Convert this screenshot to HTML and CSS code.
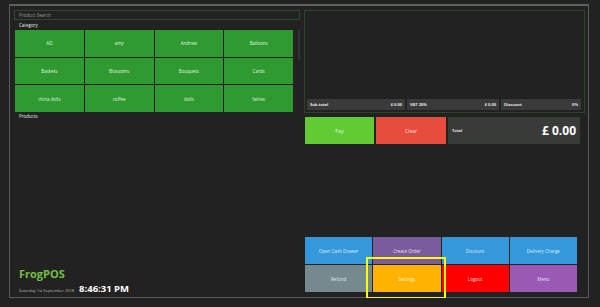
FILE: index.html
```html
<!DOCTYPE html>
<html>
<head>
<meta charset="utf-8">
<link rel="stylesheet" href="styles.css">
</head>
<body>
<div class="frame">
  <div class="left">
    <div class="search">Product Search</div>
    <div class="label">Category</div>
    <div class="cat-wrap">
      <div class="cats">
        <div class="cat">AD</div>
        <div class="cat">amy</div>
        <div class="cat">Andrew</div>
        <div class="cat">Balloons</div>
        <div class="cat">Baskets</div>
        <div class="cat">Blossoms</div>
        <div class="cat">Bouquets</div>
        <div class="cat">Cards</div>
        <div class="cat">china dolls</div>
        <div class="cat">coffee</div>
        <div class="cat">dolls</div>
        <div class="cat">fairies</div>
      </div>
      <div class="scroll"></div>
    </div>
    <div class="label products">Products</div>
    <div class="spacer"></div>
    <div class="brand">FrogPOS</div>
    <div class="clock">
      <span class="date">Saturday 1st September 2018</span>
      <span class="time">8:46:31 PM</span>
    </div>
  </div>
  <div class="right">
    <div class="order">
      <div class="totals">
        <div class="tbox"><span>Sub-total</span><span>£ 0.00</span></div>
        <div class="tbox"><span>VAT 20%</span><span>£ 0.00</span></div>
        <div class="tbox"><span>Discount</span><span>0%</span></div>
      </div>
    </div>
    <div class="actions">
      <div class="btn pay">Pay</div>
      <div class="btn clear">Clear</div>
      <div class="total"><span class="tlabel">Total</span><span class="tval">£ 0.00</span></div>
    </div>
    <div class="spacer"></div>
    <div class="funcs">
      <div class="btn blue">Open Cash Drawer</div>
      <div class="btn violet">Create Order</div>
      <div class="btn blue">Discount</div>
      <div class="btn blue">Delivery Charge</div>
      <div class="btn grey">Refund</div>
      <div class="btn amber">Settings</div>
      <div class="btn red">Logout</div>
      <div class="btn purple">Menu</div>
    </div>
  </div>
  <div class="highlight"></div>
</div>
</body>
</html>
```

FILE: styles.css
```css
html, body {
  margin: 0;
  background: #222222;
  font-family: "Open Sans", "DejaVu Sans", sans-serif;
  color: #dddddd;
}

.frame {
  position: relative;
  box-sizing: border-box;
  margin: 4px 0 0 9px;
  width: 580px;
  height: 294px;
  border: 1px solid #5a5a5a;
  border-top: 2px solid #5f5f5f;
  padding: 4px 3px 3px 4px;
  display: flex;
  gap: 4px;
}

.left {
  width: 286px;
  display: flex;
  flex-direction: column;
}

.search {
  box-sizing: border-box;
  height: 10px;
  border: 1px solid #2c4a2c;
  font-size: 4.5px;
  line-height: 8px;
  color: #9a9a9a;
  padding-left: 4px;
}

.label {
  font-size: 4.5px;
  line-height: 10px;
  color: #e8e8e8;
  padding-left: 5px;
}

.products {
  line-height: 9px;
}

.cat-wrap {
  display: flex;
  height: 82px;
}

.cats {
  margin-left: 1px;
  width: 278px;
  display: grid;
  grid-template-columns: repeat(4, 1fr);
  grid-template-rows: repeat(3, 1fr);
  gap: 1px;
  background: #1b1b1b;
}

.cat {
  background: #2e9a30;
  color: #e2f2e0;
  font-size: 4.5px;
  display: flex;
  align-items: center;
  justify-content: center;
}

.scroll {
  margin-left: 5px;
  width: 2px;
  height: 30px;
  background: #333333;
}

.spacer {
  flex: 1;
}

.brand {
  padding-left: 5px;
  font-size: 11px;
  font-weight: 700;
  line-height: 12px;
  color: #76c043;
}

.clock {
  box-sizing: border-box;
  padding: 2px 0 0 5px;
  display: flex;
  align-items: baseline;
  gap: 5px;
  height: 14px;
}

.date {
  font-size: 4px;
  color: #bbbbbb;
}

.time {
  font-size: 9.5px;
  font-weight: 700;
  color: #ffffff;
}

.right {
  width: 281px;
  display: flex;
  flex-direction: column;
}

.order {
  box-sizing: border-box;
  height: 103px;
  border: 1px solid #294629;
  display: flex;
  flex-direction: column;
  justify-content: flex-end;
  padding: 0 2px 2px 2px;
}

.totals {
  display: grid;
  grid-template-columns: 98px 92px 80px;
  gap: 2px;
  height: 11px;
}

.tbox {
  background: #3a3a3a;
  display: flex;
  align-items: center;
  justify-content: space-between;
  padding: 0 3px;
  font-size: 4px;
  font-weight: 700;
  color: #e6e6e6;
}

.actions {
  margin: 4px 0 0 1px;
  height: 27px;
  display: flex;
  gap: 2px;
}

.btn {
  display: flex;
  align-items: center;
  justify-content: center;
  font-size: 4.5px;
  color: rgba(255, 255, 255, 0.85);
}

.pay {
  width: 69px;
  background: #62cb34;
  font-size: 5px;
}

.clear {
  width: 70px;
  background: #e74c3c;
  font-size: 5px;
}

.total {
  box-sizing: border-box;
  width: 132px;
  background: #3a3a3a;
  border: 1px solid #2c432c;
  display: flex;
  align-items: center;
  justify-content: space-between;
  padding: 0 3px 0 3px;
}

.tlabel {
  font-size: 4px;
  font-weight: 700;
  color: #e6e6e6;
}

.tval {
  font-size: 12px;
  font-weight: 700;
  color: #ffffff;
}

.funcs {
  margin: 0 0 2px 1px;
  width: 272px;
  display: grid;
  grid-template-columns: repeat(4, 1fr);
  grid-template-rows: 27px 27px;
  gap: 1px;
}

.blue { background: #3498db; }
.violet { background: #7a5c9c; }
.grey { background: #76898f; }
.amber { background: #ffb300; }
.red { background: #ff0000; }
.purple { background: #9b59b6; }

.highlight {
  position: absolute;
  left: 356px;
  top: 251px;
  width: 76px;
  height: 38px;
  border: 2.5px solid #ffff00;
}
```
